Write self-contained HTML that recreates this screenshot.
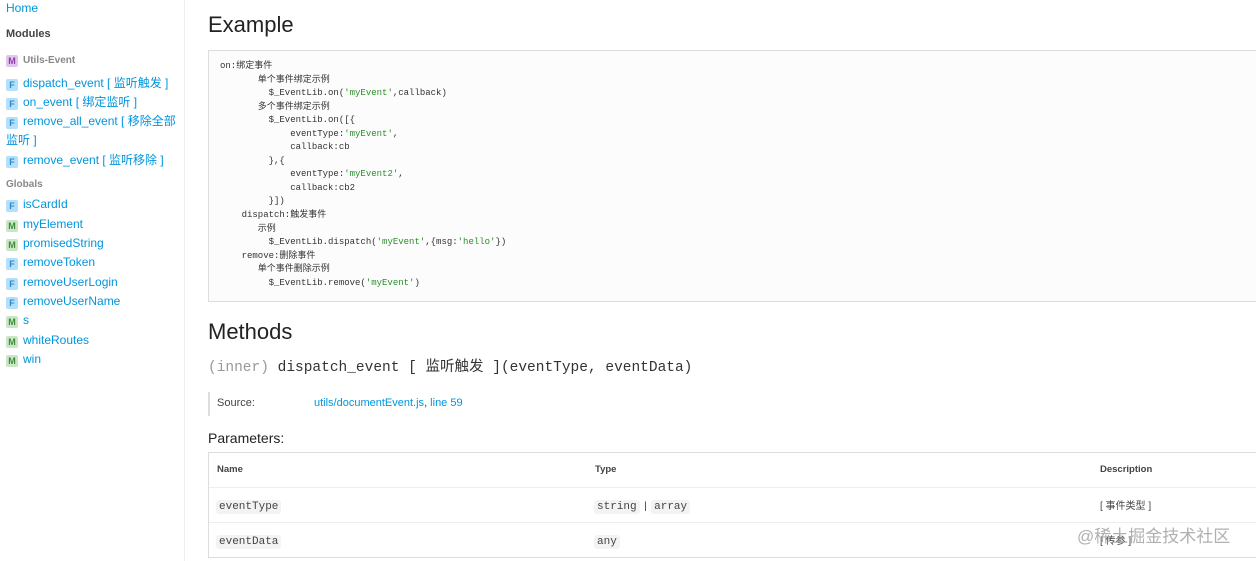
<!DOCTYPE html>
<html><head><meta charset="utf-8"><style>
*{margin:0;padding:0;box-sizing:border-box}
html,body{width:1256px;height:561px;overflow:hidden}
body{background:#fff;font-family:"Liberation Sans","Noto Sans CJK SC",sans-serif;position:relative;color:#333}
.a{position:absolute;white-space:nowrap}
.nav{position:absolute;left:0;top:0;width:185px;height:561px;border-right:1px solid #eee}
.l{color:#0095dd;font-size:12px}
.b{display:inline-block;width:12px;height:12px;border-radius:2px;font-size:9px;font-weight:bold;text-align:center;line-height:12px;margin-right:5px;vertical-align:-1px}
.F{background:#b3e0fa;color:#2e88c5}
.M{background:#c9e7c5;color:#3f8a3a}
.MP{background:#e3c4ec;color:#8b3ea8}
.g{color:#888;font-size:10px;font-weight:bold}
pre.a{white-space:pre;font-family:"Liberation Mono","Noto Sans CJK SC",monospace;font-size:9px;line-height:13.55px;color:#333}
.s{color:#2a8f2a}
.mono{font-family:"Liberation Mono","Noto Sans CJK SC",monospace}
code{font-family:"Liberation Mono",monospace;font-size:11px;background:#f3f3f3;padding:1px 3px;border-radius:3px;color:#444}
</style></head><body>
<div class="nav">
<div class="a l" style="left:6px;top:1px">Home</div>
<div class="a" style="left:6px;top:28px;font-size:11px;font-weight:bold;color:#444">Modules</div>
<div class="a g" style="left:6px;top:55px"><span class="b MP">M</span>Utils-Event</div>
<div class="a l" style="left:6px;top:74px"><span class="b F">F</span>dispatch_event [ 监听触发 ]</div>
<div class="a l" style="left:6px;top:93px"><span class="b F">F</span>on_event [ 绑定监听 ]</div>
<div class="a l" style="left:6px;top:112px"><span class="b F">F</span>remove_all_event [ 移除全部</div>
<div class="a l" style="left:6px;top:131px">监听 ]</div>
<div class="a l" style="left:6px;top:151px"><span class="b F">F</span>remove_event [ 监听移除 ]</div>
<div class="a g" style="left:6px;top:179px">Globals</div>
<div class="a l" style="left:6px;top:197px"><span class="b F">F</span>isCardId</div>
<div class="a l" style="left:6px;top:217px"><span class="b M">M</span>myElement</div>
<div class="a l" style="left:6px;top:236px"><span class="b M">M</span>promisedString</div>
<div class="a l" style="left:6px;top:255px"><span class="b F">F</span>removeToken</div>
<div class="a l" style="left:6px;top:275px"><span class="b F">F</span>removeUserLogin</div>
<div class="a l" style="left:6px;top:294px"><span class="b F">F</span>removeUserName</div>
<div class="a l" style="left:6px;top:313px"><span class="b M">M</span>s</div>
<div class="a l" style="left:6px;top:333px"><span class="b M">M</span>whiteRoutes</div>
<div class="a l" style="left:6px;top:352px"><span class="b M">M</span>win</div>
</div>
<div class="a" style="left:208px;top:12px;font-size:22px;color:#222">Example</div>
<div class="a" style="left:208px;top:50px;width:1048px;height:252px;border:1px solid #ddd;border-right:none;background:#fcfcfc"></div>
<pre class="a" style="left:220px;top:60px">on:绑定事件
       单个事件绑定示例
         $_EventLib.on(<span class="s">'myEvent'</span>,callback)
       多个事件绑定示例
         $_EventLib.on([{
             eventType:<span class="s">'myEvent'</span>,
             callback:cb
         },{
             eventType:<span class="s">'myEvent2'</span>,
             callback:cb2
         }])
    dispatch:触发事件
       示例
         $_EventLib.dispatch(<span class="s">'myEvent'</span>,{msg:<span class="s">'hello'</span>})
    remove:删除事件
       单个事件删除示例
         $_EventLib.remove(<span class="s">'myEvent'</span>)</pre>
<div class="a" style="left:208px;top:319px;font-size:22px;color:#222">Methods</div>
<div class="a mono" style="left:208px;top:355px;font-size:14.5px;color:#333"><span style="color:#999">(inner)</span> dispatch_event [ 监听触发 ](eventType, eventData)</div>
<div class="a" style="left:208px;top:392px;height:24px;border-left:2px solid #ddd"></div>
<div class="a" style="left:217px;top:397px;font-size:11px;color:#444">Source:</div>
<div class="a" style="left:314px;top:397px;font-size:11px;color:#0095dd">utils/documentEvent.js<span style="color:#444">,</span> line 59</div>
<div class="a" style="left:208px;top:430px;font-size:14px;color:#222">Parameters:</div>
<div class="a" style="left:208px;top:452px;width:1048px;height:106px;border:1px solid #ddd;border-right:none"></div>
<div class="a" style="left:209px;top:487px;width:1047px;border-top:1px solid #eee"></div>
<div class="a" style="left:209px;top:522px;width:1047px;border-top:1px solid #eee"></div>
<div class="a" style="left:217px;top:464px;font-size:9.5px;font-weight:bold;color:#444">Name</div>
<div class="a" style="left:595px;top:464px;font-size:9.5px;font-weight:bold;color:#444">Type</div>
<div class="a" style="left:1100px;top:464px;font-size:9.5px;font-weight:bold;color:#444">Description</div>
<div class="a" style="left:216px;top:496px"><code>eventType</code></div>
<div class="a" style="left:594px;top:496px"><code>string</code> <span style="font-size:10px">|</span> <code>array</code></div>
<div class="a" style="left:1100px;top:497px;font-size:10px;color:#444">[ 事件类型 ]</div>
<div class="a" style="left:216px;top:531px"><code>eventData</code></div>
<div class="a" style="left:594px;top:531px"><code>any</code></div>
<div class="a" style="left:1100px;top:532px;font-size:10px;color:#444">[ 传参 ]</div>
<div class="a" style="left:1077px;top:522px;font-size:17px;color:rgba(150,150,150,0.75)">@稀土掘金技术社区</div>
</body></html>
